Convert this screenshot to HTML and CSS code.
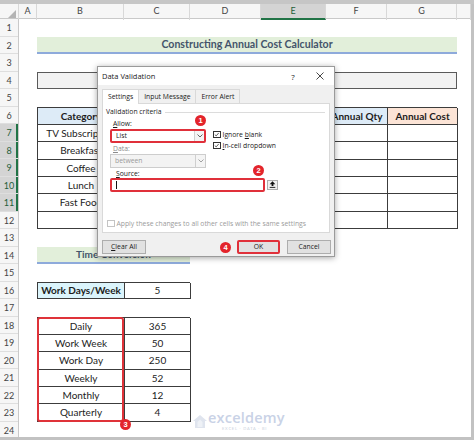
FILE: index.html
```html
<!DOCTYPE html>
<html lang="en">
<head>
    <meta charset="UTF-8">
    <title>Constructing Annual Cost Calculator</title>
    <link rel="stylesheet" href="styles.css">
</head>
<body>
<div class="screen">
    <div class="topbar"></div>
    <div class="main">
        <div class="sheet">
            <div class="colheads">
                <div class="corner"><svg width="8" height="8" viewBox="0 0 8 8"><polygon points="8,0 8,8 0,8" fill="#b4b4b4"/></svg></div>
                <div class="ch">A</div>
                <div class="ch">B</div>
                <div class="ch">C</div>
                <div class="ch">D</div>
                <div class="ch sel">E</div>
                <div class="ch">F</div>
                <div class="ch">G</div>
                <div class="ch"></div>
            </div>
            <div class="body">
                <div class="rowheads">
                    <div class="rh">1</div><div class="rh">2</div><div class="rh">3</div><div class="rh">4</div>
                    <div class="rh">5</div><div class="rh">6</div>
                    <div class="rh sel">7</div><div class="rh sel">8</div><div class="rh sel">9</div>
                    <div class="rh sel">10</div><div class="rh sel">11</div>
                    <div class="rh">12</div><div class="rh">13</div><div class="rh">14</div><div class="rh">15</div>
                    <div class="rh">16</div><div class="rh">17</div><div class="rh">18</div><div class="rh">19</div>
                    <div class="rh">20</div><div class="rh">21</div><div class="rh">22</div><div class="rh">23</div>
                    <div class="rh">24</div>
                </div>
                <div class="cells">
                    <div class="title">Constructing Annual Cost Calculator</div>
                    <div class="inputbar"></div>

                    <div class="costtable">
                        <div class="c head blue">Category</div>
                        <div class="c head">Cost/Unit</div>
                        <div class="c head">Frequency</div>
                        <div class="c head">Unit</div>
                        <div class="c head blue">Annual Qty</div>
                        <div class="c head peach">Annual Cost</div>

                        <div class="c">TV Subscription</div><div class="c"></div><div class="c"></div><div class="c"></div><div class="c"></div><div class="c"></div>
                        <div class="c">Breakfast</div><div class="c"></div><div class="c"></div><div class="c"></div><div class="c"></div><div class="c"></div>
                        <div class="c">Coffee</div><div class="c"></div><div class="c"></div><div class="c"></div><div class="c"></div><div class="c"></div>
                        <div class="c">Lunch</div><div class="c"></div><div class="c"></div><div class="c"></div><div class="c"></div><div class="c"></div>
                        <div class="c">Fast Food</div><div class="c"></div><div class="c"></div><div class="c"></div><div class="c"></div><div class="c"></div>
                        <div class="c"></div><div class="c"></div><div class="c"></div><div class="c"></div><div class="c"></div><div class="c"></div>
                    </div>

                    <div class="subtitle">Time Conversion</div>

                    <div class="workdays">
                        <div class="c head cyan">Work Days/Week</div>
                        <div class="c">5</div>
                    </div>

                    <div class="units">
                        <div class="c">Daily</div><div class="c">365</div>
                        <div class="c">Work Week</div><div class="c">50</div>
                        <div class="c">Work Day</div><div class="c">250</div>
                        <div class="c">Weekly</div><div class="c">52</div>
                        <div class="c">Monthly</div><div class="c">12</div>
                        <div class="c">Quarterly</div><div class="c">4</div>
                    </div>
                    <div class="mark">
                        <span class="badge b3">3</span>
                    </div>

                    <div class="watermark">
                        <svg width="14" height="13" viewBox="0 0 14 13"><path d="M7 0 L14 6 L12 6 L12 13 L2 13 L2 6 L0 6 Z" fill="#dfe4ee"/><path d="M4.5 7 L7 4.5 L9.5 7 L9.5 12 L4.5 12 Z" fill="#eef1f6"/></svg>
                        <div class="wm-text">
                            <span class="wm-name">exceldemy</span>
                            <span class="wm-tag">EXCEL · DATA · BI</span>
                        </div>
                    </div>
                </div>
            </div>
        </div>
        <div class="scrollbar"></div>
    </div>
    <div class="bottombar"></div>

    <div class="dialog">
        <div class="dlg-title">
            <span class="dlg-name">Data Validation</span>
            <span class="dlg-help">?</span>
            <span class="dlg-close"><svg width="8" height="8" viewBox="0 0 8 8"><path d="M0.5 0.5 L7.5 7.5 M7.5 0.5 L0.5 7.5" stroke="#333" stroke-width="0.9"/></svg></span>
        </div>
        <div class="tabs">
            <span class="tab active">Settings</span>
            <span class="tab">Input Message</span>
            <span class="tab">Error Alert</span>
        </div>
        <div class="panel">
            <div class="group-title"><span>Validation criteria</span><i class="rule"></i></div>
            <div class="criteria">
                <div class="fields">
                    <div class="lbl"><u>A</u>llow:</div>
                    <div class="select red">
                        <span class="val">List</span>
                        <span class="arrow"><svg width="6" height="4" viewBox="0 0 6 4"><path d="M0.5 0.5 L3 3 L5.5 0.5" fill="none" stroke="#555" stroke-width="0.9"/></svg></span>
                        <span class="badge b1">1</span>
                    </div>
                    <div class="lbl dim"><u>D</u>ata:</div>
                    <div class="select off">
                        <span class="val">between</span>
                        <span class="arrow"><svg width="6" height="4" viewBox="0 0 6 4"><path d="M0.5 0.5 L3 3 L5.5 0.5" fill="none" stroke="#999" stroke-width="0.9"/></svg></span>
                    </div>
                </div>
                <div class="checks">
                    <div class="check"><span class="box"><svg width="7" height="7" viewBox="0 0 7 7"><path d="M1 3.6 L2.8 5.3 L6 1.5" fill="none" stroke="#222" stroke-width="0.9"/></svg></span><span>Ignore <u>b</u>lank</span></div>
                    <div class="check"><span class="box"><svg width="7" height="7" viewBox="0 0 7 7"><path d="M1 3.6 L2.8 5.3 L6 1.5" fill="none" stroke="#222" stroke-width="0.9"/></svg></span><span><u>I</u>n-cell dropdown</span></div>
                </div>
            </div>
            <div class="lbl src"><u>S</u>ource:</div>
            <div class="source-row">
                <div class="source red">
                    <span class="caret"></span>
                    <span class="badge b2">2</span>
                </div>
                <span class="pick"><svg width="7" height="7" viewBox="0 0 7 7"><path d="M3.5 0.3 L6.3 3.2 L4.4 3.2 L4.4 5 L2.6 5 L2.6 3.2 L0.7 3.2 Z" fill="#111"/><rect x="0.7" y="5.9" width="5.6" height="0.9" fill="#111"/></svg></span>
            </div>
            <div class="check apply"><span class="box off"></span><span>Apply these changes to all other cells with the same settings</span></div>
        </div>
        <div class="buttons">
            <span class="btn"><u>C</u>lear All</span>
            <span class="badge b4">4</span>
            <span class="btn ok">OK</span>
            <span class="btn">Cancel</span>
        </div>
    </div>
</div>
</body>
</html>
```

FILE: styles.css
```css
* {
    box-sizing: border-box;
}
body {
    margin: 0;
    font-family: Lato, "Liberation Sans", sans-serif;
    color: #1c1c1c;
}
.screen {
    position: relative;
    width: 474px;
    height: 440px;
    overflow: hidden;
    background: #fff;
    display: flex;
    flex-direction: column;
}
.topbar {
    height: 4px;
    flex: none;
    background: #c6c6c6;
}
.main {
    flex: 1;
    display: flex;
    min-height: 0;
}
.sheet {
    width: 471px;
    display: flex;
    flex-direction: column;
    overflow: hidden;
}
.scrollbar {
    width: 3px;
    background: #c2c2c2;
}
.bottombar {
    height: 3px;
    flex: none;
    background: #c2c2c2;
}

/* headers */
.colheads {
    display: grid;
    grid-template-columns: 19px 18px 87px 66px 71px 65px 61px 70px 14px;
    height: 15px;
    flex: none;
    background: #f6f6f6;
    border-bottom: 1px solid #c9c9c9;
}
.ch {
    border-right: 1px solid #d8d8d8;
    font-size: 9px;
    line-height: 14px;
    text-align: center;
    color: #444;
}
.ch.sel {
    background: #d4d4d4;
    border-bottom: 2px solid #217346;
    color: #1f5e3a;
}
.corner {
    border-right: 1px solid #d8d8d8;
    display: flex;
    align-items: flex-end;
    justify-content: flex-end;
    padding: 0 2px 2px 0;
}
.corner svg {
    display: block;
}
.body {
    display: flex;
    flex: 1;
    min-height: 0;
}
.rowheads {
    width: 19px;
    flex: none;
    display: grid;
    grid-auto-rows: 17.5px;
    background: #f6f6f6;
    border-right: 1px solid #c9c9c9;
}
.rh {
    border-bottom: 1px solid #dedede;
    font-size: 9px;
    line-height: 17px;
    text-align: center;
    color: #444;
}
.rh.sel {
    background: #d4d4d4;
    box-shadow: inset -2px 0 0 #217346;
    color: #1f5e3a;
}

/* sheet cells */
.cells {
    flex: 1;
    display: grid;
    grid-template-columns: 18px 87px 66px 71px 65px 61px 70px 14px;
    grid-template-rows: repeat(24, 17.5px);
    font-size: 10px;
}
.title {
    grid-row: 2;
    grid-column: 2 / 8;
    background: #e2efda;
    border-bottom: 2px solid #8eaadb;
    display: flex;
    align-items: center;
    justify-content: center;
    font-weight: 700;
    font-size: 10.6px;
    color: #44546a;
}
.inputbar {
    grid-row: 4;
    grid-column: 2 / 8;
    background: #f2f2f2;
    border: 1px solid #5a5a5a;
}
.costtable {
    grid-row: 6 / 13;
    grid-column: 2 / 8;
    display: grid;
    grid-template-columns: 87px 66px 71px 65px 61px 70px;
    grid-template-rows: repeat(7, 1fr);
    border-left: 1px solid #3c3c3c;
    border-top: 1px solid #3c3c3c;
}
.c {
    border-right: 1px solid #3c3c3c;
    border-bottom: 1px solid #3c3c3c;
    display: flex;
    align-items: center;
    justify-content: center;
    white-space: nowrap;
    overflow: hidden;
}
.head {
    font-weight: 700;
}
.blue {
    background: #ddebf7;
}
.peach {
    background: #fce4d6;
}
.cyan {
    background: #dbf4fb;
}
.subtitle {
    grid-row: 14;
    grid-column: 2 / 4;
    background: #e2efda;
    border-bottom: 2px solid #8eaadb;
    display: flex;
    align-items: center;
    justify-content: center;
    font-weight: 700;
    color: #44546a;
}
.workdays {
    grid-row: 16;
    grid-column: 2 / 4;
    display: grid;
    grid-template-columns: 87px 66px;
    border-left: 1px solid #3c3c3c;
    border-top: 1px solid #3c3c3c;
}
.units {
    grid-row: 18 / 24;
    grid-column: 2 / 4;
    display: grid;
    grid-template-columns: 87px 66px;
    grid-template-rows: repeat(6, 1fr);
    border-left: 1px solid #3c3c3c;
    border-top: 1px solid #3c3c3c;
}
.mark {
    grid-row: 18 / 24;
    grid-column: 2;
    position: relative;
    border: 2px solid #df3239;
    border-radius: 3px;
}
.watermark {
    grid-row: 23 / 25;
    grid-column: 4 / 7;
    align-self: center;
    display: flex;
    align-items: center;
    gap: 1px;
    margin-left: 3px;
}
.wm-text {
    display: flex;
    flex-direction: column;
}
.wm-name {
    font-family: "Open Sans", sans-serif;
    font-size: 14.5px;
    line-height: 12px;
    font-weight: 600;
    color: #c9d2e6;
    letter-spacing: 0.2px;
}
.wm-tag {
    font-size: 4px;
    line-height: 5px;
    margin-top: 2px;
    color: #ccd3e0;
    letter-spacing: 0.8px;
    padding-left: 14px;
}

/* annotation badges */
.badge {
    position: absolute;
    width: 11px;
    height: 11px;
    border-radius: 50%;
    background: #e3242b;
    color: #fff;
    font-family: "Liberation Sans", sans-serif;
    font-size: 7.5px;
    font-weight: 700;
    line-height: 11px;
    text-align: center;
}
.b1 {
    left: 83px;
    top: -16px;
}
.b2 {
    left: 141px;
    top: -15px;
}
.b3 {
    left: 81px;
    top: 100px;
}

/* dialog */
.dialog {
    position: absolute;
    left: 97px;
    top: 66px;
    width: 238px;
    height: 191px;
    background: #f0f0f0;
    border: 1px solid #9a9a9a;
    box-shadow: 0 1px 6px rgba(0, 0, 0, 0.35);
    font-family: "Open Sans", sans-serif;
    font-size: 6.8px;
    color: #1a1a1a;
    display: flex;
    flex-direction: column;
}
.dlg-title {
    height: 18px;
    flex: none;
    background: #fff;
    display: flex;
    align-items: center;
    padding-left: 4px;
}
.dlg-name {
    font-size: 7.5px;
    flex: 1;
}
.dlg-help {
    width: 10px;
    text-align: center;
    font-size: 8px;
    margin-right: 17px;
}
.dlg-close {
    width: 10px;
    margin-right: 9px;
    display: flex;
    justify-content: center;
}
.tabs {
    display: flex;
    height: 14px;
    margin: 4px 0 0 4px;
    flex: none;
}
.tab {
    padding: 0 5px;
    line-height: 13px;
    border: 1px solid #d9d9d9;
    border-bottom: none;
    margin-left: -1px;
}
.tab.active {
    background: #fff;
    margin-left: 0;
    position: relative;
    z-index: 1;
    height: 15px;
}
.panel {
    height: 130px;
    flex: none;
    margin: 0 4px 0 4px;
    padding: 3px 4px 0 3px;
    background: #fff;
    border: 1px solid #d9d9d9;
    display: flex;
    flex-direction: column;
}
.group-title {
    display: flex;
    align-items: center;
    height: 10px;
    line-height: 10px;
}
.rule {
    flex: 1;
    height: 1px;
    background: #dcdcdc;
    margin-left: 3px;
}
.criteria {
    display: flex;
    margin-top: 2px;
}
.fields {
    width: 96px;
    margin-left: 4px;
}
.lbl {
    height: 10px;
    line-height: 10px;
    padding-left: 3px;
}
.lbl.dim {
    color: #8a8a8a;
    margin-top: 1.5px;
}
.lbl.src {
    height: 9px;
    line-height: 9px;
    margin: 1px 0 0 7px;
}
.select {
    position: relative;
    height: 13.5px;
    border: 1px solid #b9b9b9;
    background: #fff;
    display: flex;
    align-items: center;
}
.select .val {
    flex: 1;
    padding-left: 4px;
}
.select .arrow {
    width: 10px;
    height: 100%;
    border-left: 1px solid #cfcfcf;
    display: flex;
    align-items: center;
    justify-content: center;
    background: #f4f4f4;
}
.select.off {
    background: #f3f3f3;
    border-color: #cdcdcd;
    color: #9a9a9a;
}
.red {
    border: 2px solid #e0303a;
    border-radius: 2px;
}
.checks {
    margin: 10px 0 0 7px;
}
.check {
    display: flex;
    align-items: center;
    height: 11px;
    white-space: nowrap;
}
.box {
    width: 7.5px;
    height: 7.5px;
    border: 1px solid #333;
    margin-right: 2px;
    display: flex;
    align-items: center;
    justify-content: center;
    background: #fff;
}
.box svg {
    display: block;
}
.box.off {
    border-color: #c4c4c4;
}
.source-row {
    display: flex;
    align-items: center;
    margin-left: 4px;
}
.source {
    position: relative;
    width: 155px;
    height: 14.5px;
    background: #fff;
    display: flex;
    align-items: center;
    padding-left: 4px;
}
.caret {
    width: 1px;
    height: 8px;
    background: #111;
}
.pick {
    width: 11px;
    height: 10px;
    margin-left: 1.5px;
    border: 1px solid #adadad;
    background: #f1f1f1;
    display: flex;
    align-items: center;
    justify-content: center;
}
.check.apply {
    margin-top: 26px;
    margin-left: 1px;
    color: #9b9b9b;
}
.buttons {
    display: flex;
    align-items: center;
    height: 14px;
    margin-top: 7px;
    padding: 0 3px 0 4px;
    flex: none;
    position: relative;
}
.btn {
    width: 44px;
    height: 14px;
    line-height: 12px;
    text-align: center;
    background: #e1e1e1;
    border: 1px solid #adadad;
}
.btn.ok {
    width: 43px;
    border: 2px solid #e0303a;
    border-radius: 2px;
    line-height: 10px;
    margin-right: 7px;
}
.b4 {
    position: static;
    margin-left: auto;
    margin-right: 6px;
}
```
